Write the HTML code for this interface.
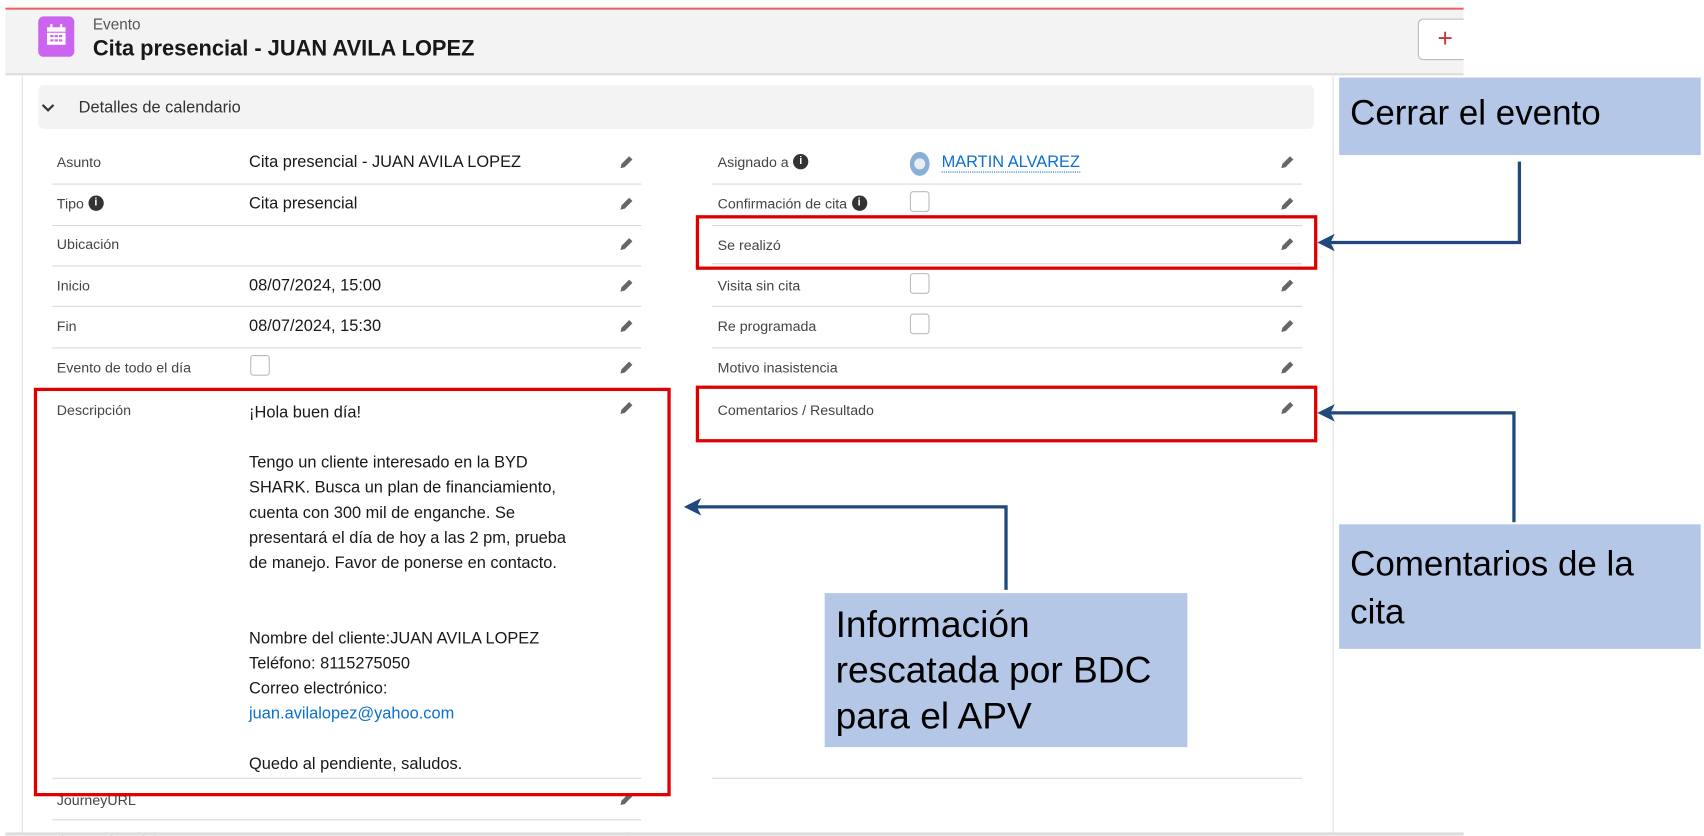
<!DOCTYPE html>
<html><head><meta charset="utf-8"><style>
*{margin:0;padding:0;box-sizing:border-box}
html,body{width:1704px;height:836px;overflow:hidden;background:#fff}
#w{position:absolute;left:0;top:0;width:1560px;height:765px;overflow:hidden;transform:scale(1.09231);transform-origin:0 0;font-family:"Liberation Sans",sans-serif;color:#181818}
.a{position:absolute}
.lab{position:absolute;font-size:13px;color:#444;white-space:nowrap}
.val{position:absolute;font-size:15px;color:#181818;white-space:nowrap}
.ln{position:absolute;height:1px;background:#d8d8d8}
.cb{position:absolute;width:18px;height:19px;border:1px solid #bbb;border-radius:3px;background:#fff}
.info{display:inline-block;width:14px;height:14px;border-radius:50%;background:#333;color:#fff;font-size:10px;font-weight:bold;text-align:center;line-height:14px;vertical-align:top;margin-left:4px}
.call{position:absolute;background:#b4c7e7;color:#000;font-size:32px;line-height:40px;padding-left:10px}
.box{position:absolute;border:3px solid #e00000}
</style></head><body><div id="w">
<div class="a" style="left:5px;top:7px;width:1335px;height:2px;background:#f06262"></div>
<div class="a" style="left:5px;top:9px;width:1335px;height:60px;background:#f3f3f3;border-bottom:2px solid #ddd"></div>
<div class="a" style="left:35px;top:15px;width:33px;height:37px;border-radius:5px;background:#cb65f0"></div>
<svg class="a" style="left:41px;top:22px" width="21" height="22" viewBox="0 0 21 22"><rect x="2" y="3" width="17" height="4" fill="#fff"/><rect x="5" y="0" width="2" height="4" fill="#fff"/><rect x="14" y="0" width="2" height="4" fill="#fff"/><rect x="2" y="8" width="17" height="11" fill="#fff"/><g fill="#cb65f0"><rect x="5" y="10" width="3" height="2"/><rect x="9" y="10" width="3" height="2"/><rect x="13" y="10" width="3" height="2"/><rect x="5" y="14" width="3" height="2"/><rect x="9" y="14" width="3" height="2"/><rect x="13" y="14" width="3" height="2"/></g></svg>
<div class="a" style="left:85px;top:14px;font-size:14px;color:#555">Evento</div>
<div class="a" style="left:85px;top:34px;font-size:20px;font-weight:bold">Cita presencial - JUAN AVILA LOPEZ</div>
<div class="a" style="left:1298px;top:17px;width:50px;height:38px;border:1px solid #bbb;border-radius:5px;background:#fff"></div>
<div class="a" style="left:1316px;top:22px;font-size:24px;color:#c23934">+</div>
<div class="a" style="left:1340px;top:0;width:220px;height:70px;background:#fff"></div>
<div class="a" style="left:20px;top:70px;width:1px;height:693px;background:#e0e0e0"></div>
<div class="a" style="left:1220px;top:70px;width:1px;height:693px;background:#e0e0e0"></div>
<div class="a" style="left:35px;top:78px;width:1168px;height:40px;border-radius:5px;background:#f3f3f3"></div>
<svg class="a" style="left:38px;top:94px" width="12" height="10"><path d="M1 2 L6 7 L11 2" stroke="#333" stroke-width="2" fill="none"/></svg>
<div class="a" style="left:72px;top:90px;font-size:15px;color:#333">Detalles de calendario</div>

<div class="lab" style="left:52px;top:141px">Asunto</div><div class="val" style="left:228px;top:140px">Cita presencial - JUAN AVILA LOPEZ</div>
<div class="ln" style="left:48px;top:168px;width:539px"></div>
<div class="lab" style="left:52px;top:179px">Tipo<span class="info">i</span></div><div class="val" style="left:228px;top:178px">Cita presencial</div>
<div class="ln" style="left:48px;top:206px;width:539px"></div>
<div class="lab" style="left:52px;top:216px">Ubicación</div>
<div class="ln" style="left:48px;top:243px;width:539px"></div>
<div class="lab" style="left:52px;top:254px">Inicio</div><div class="val" style="left:228px;top:253px">08/07/2024, 15:00</div>
<div class="ln" style="left:48px;top:280px;width:539px"></div>
<div class="lab" style="left:52px;top:291px">Fin</div><div class="val" style="left:228px;top:290px">08/07/2024, 15:30</div>
<div class="ln" style="left:48px;top:318px;width:539px"></div>
<div class="lab" style="left:52px;top:329px">Evento de todo el día</div><div class="cb" style="left:229px;top:325px"></div>
<div class="ln" style="left:48px;top:355px;width:539px"></div>
<div class="lab" style="left:52px;top:368px">Descripción</div>
<div class="val" style="left:228px;top:366px;line-height:23px">¡Hola buen día!<br><br>Tengo un cliente interesado en la BYD<br>SHARK. Busca un plan de financiamiento,<br>cuenta con 300 mil de enganche. Se<br>presentará el día de hoy a las 2 pm, prueba<br>de manejo. Favor de ponerse en contacto.<br><br><br>Nombre del cliente:JUAN AVILA LOPEZ<br>Teléfono: 8115275050<br>Correo electrónico:<br><span style="color:#0b70d0">juan.avilalopez@yahoo.com</span><br><br>Quedo al pendiente, saludos.</div>
<div class="ln" style="left:48px;top:712px;width:539px"></div>
<div class="lab" style="left:52px;top:725px">JourneyURL</div>
<div class="ln" style="left:48px;top:750px;width:539px"></div>
<div class="lab" style="left:52px;top:760px">JourneyTemplate</div>

<div class="lab" style="left:657px;top:141px">Asignado a<span class="info">i</span></div>
<div class="a" style="left:833px;top:139px;width:18px;height:22px;border-radius:50%;background:#8ab0d8"></div>
<div class="a" style="left:837px;top:145px;width:10px;height:10px;border-radius:50%;background:#e8eef5"></div>
<div class="val" style="left:862px;top:140px;color:#0b70d0;border-bottom:1px dotted #0b70d0">MARTIN ALVAREZ</div>
<div class="ln" style="left:652px;top:168px;width:540px"></div>
<div class="lab" style="left:657px;top:179px">Confirmación de cita<span class="info">i</span></div><div class="cb" style="left:833px;top:175px"></div>
<div class="ln" style="left:652px;top:206px;width:540px"></div>
<div class="lab" style="left:657px;top:217px">Se realizó</div>
<div class="ln" style="left:652px;top:241px;width:540px"></div>
<div class="lab" style="left:657px;top:254px">Visita sin cita</div><div class="cb" style="left:833px;top:250px"></div>
<div class="ln" style="left:652px;top:280px;width:540px"></div>
<div class="lab" style="left:657px;top:291px">Re programada</div><div class="cb" style="left:833px;top:287px"></div>
<div class="ln" style="left:652px;top:318px;width:540px"></div>
<div class="lab" style="left:657px;top:329px">Motivo inasistencia</div>
<div class="ln" style="left:652px;top:355px;width:540px"></div>
<div class="lab" style="left:657px;top:368px">Comentarios / Resultado</div>
<div class="ln" style="left:652px;top:712px;width:540px"></div>

<svg class="a" style="left:0;top:0" width="1560" height="765">
<defs><g id="p"><path d="M2 13 L3 9 L10 2 L13 5 L6 12 Z" fill="#666"/></g></defs>
<use href="#p" x="566" y="141"/><use href="#p" x="566" y="179"/><use href="#p" x="566" y="216"/><use href="#p" x="566" y="254"/><use href="#p" x="566" y="291"/><use href="#p" x="566" y="329"/><use href="#p" x="566" y="366"/><use href="#p" x="566" y="724"/><use href="#p" x="566" y="760"/>
<use href="#p" x="1171" y="141"/><use href="#p" x="1171" y="179"/><use href="#p" x="1171" y="216"/><use href="#p" x="1171" y="254"/><use href="#p" x="1171" y="291"/><use href="#p" x="1171" y="329"/><use href="#p" x="1171" y="366"/>
<g stroke="#1f497d" stroke-width="3" fill="none"><path d="M1391 148 V222 H1218"/><path d="M1386 478 V378 H1218"/><path d="M921 540 V464 H636"/></g>
<g fill="#1f497d"><path d="M1206 222 L1222 214 L1218 222 L1222 230 Z"/><path d="M1206 378 L1222 370 L1218 378 L1222 386 Z"/><path d="M626 464 L642 456 L638 464 L642 472 Z"/></g>
</svg>

<div class="box" style="left:31px;top:355px;width:583px;height:374px"></div>
<div class="box" style="left:637px;top:197px;width:569px;height:50px"></div>
<div class="box" style="left:637px;top:353px;width:569px;height:52px"></div>

<div class="call" style="left:1226px;top:71px;width:331px;height:71px;padding-top:12px">Cerrar el evento</div>
<div class="call" style="left:1226px;top:480px;width:331px;height:114px;padding-top:14px;line-height:44px">Comentarios de la<br>cita</div>
<div class="call" style="left:755px;top:543px;width:332px;height:141px;padding-top:8px;font-size:34px;line-height:42px">Información<br>rescatada por BDC<br>para el APV</div>

<div class="a" style="left:5px;top:762px;width:1335px;height:3px;background:#ddd"></div>
</div></body></html>
